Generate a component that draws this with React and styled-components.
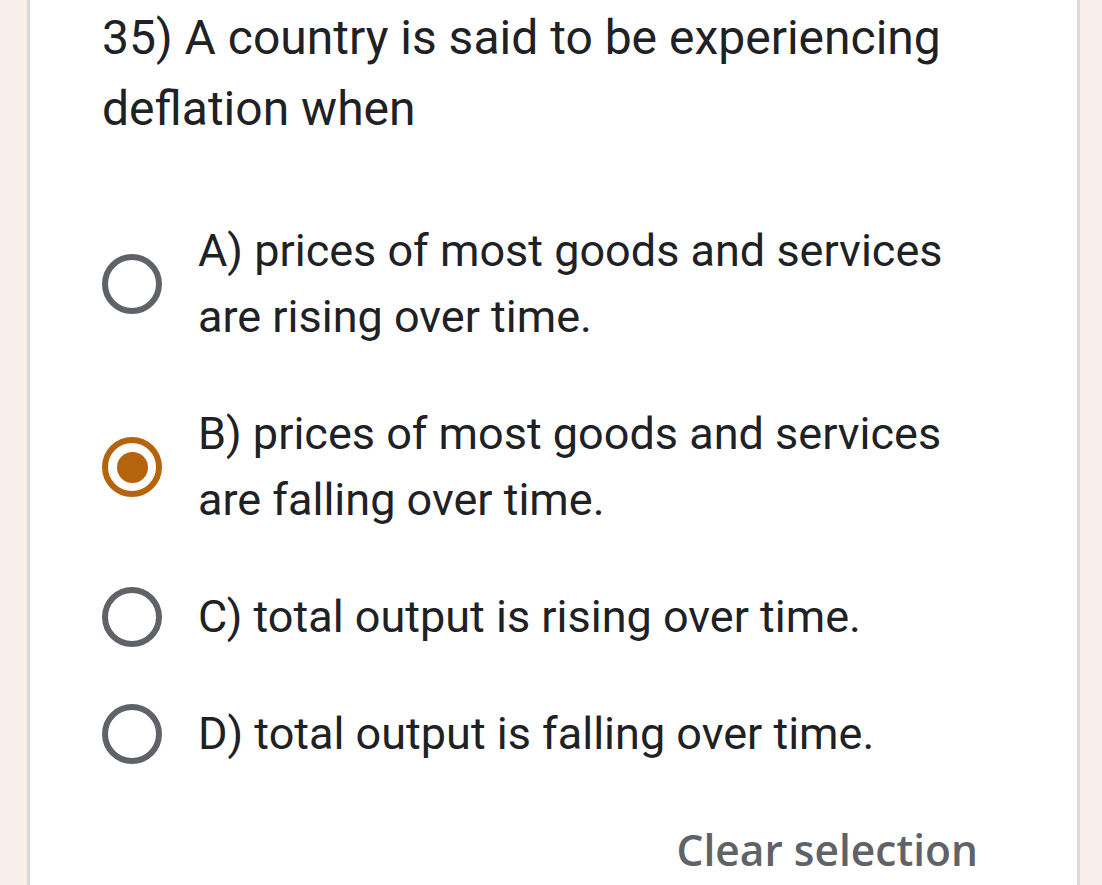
import React, { useState } from 'react';
import styled, { createGlobalStyle } from 'styled-components';

const GlobalStyle = createGlobalStyle`
  html, body {
    margin: 0;
    padding: 0;
    background: #f9efea;
  }
  body {
    font-family: Roboto, "Liberation Sans", sans-serif;
    -webkit-font-smoothing: antialiased;
  }
`;

const Page = styled.div`
  display: flex;
  padding: 0 22px 0 27px;
  height: 885px;
  overflow: hidden;
`;

const Card = styled.div`
  flex: 1;
  background: #fff;
  border-left: 3px solid #dadada;
  border-right: 3px solid #dadada;
  padding: 2px 99px 0 72px;
`;

const Question = styled.div`
  font-size: 48px;
  line-height: 71px;
  color: #202124;
`;

const Options = styled.div`
  display: flex;
  flex-direction: column;
  gap: 51px;
  margin-top: 74px;
`;

const Option = styled.label`
  display: flex;
  align-items: center;
  gap: 36px;
  cursor: pointer;
`;

const Radio = styled.span`
  flex: none;
  width: 48px;
  height: 48px;
  border: 6px solid ${p => (p.checked ? '#b5630c' : '#5f6368')};
  border-radius: 50%;
  display: flex;
  align-items: center;
  justify-content: center;
  &::after {
    content: '';
    width: 31px;
    height: 31px;
    border-radius: 50%;
    background: #b5630c;
    display: ${p => (p.checked ? 'block' : 'none')};
  }
`;

const OptionText = styled.span`
  font-size: 45px;
  line-height: 66px;
  color: #202124;
`;

const Footer = styled.div`
  display: flex;
  justify-content: flex-end;
  margin-top: 58px;
`;

const ClearButton = styled.button`
  border: none;
  background: none;
  padding: 0;
  font-family: "Open Sans", Roboto, sans-serif;
  font-weight: 600;
  font-size: 42.5px;
  line-height: 50px;
  color: #5f6368;
  cursor: pointer;
`;

const options = [
  { id: 'a', text: 'A) prices of most goods and services are rising over time.' },
  { id: 'b', text: 'B) prices of most goods and services are falling over time.' },
  { id: 'c', text: 'C) total output is rising over time.' },
  { id: 'd', text: 'D) total output is falling over time.' },
];

const App = () => {
  const [selected, setSelected] = useState('b');
  return (
    <>
      <GlobalStyle />
      <Page>
        <Card>
          <Question>35) A country is said to be experiencing deflation when</Question>
          <Options>
            {options.map(o => (
              <Option key={o.id} onClick={() => setSelected(o.id)}>
                <Radio checked={selected === o.id} />
                <OptionText>{o.text}</OptionText>
              </Option>
            ))}
          </Options>
          <Footer>
            <ClearButton onClick={() => setSelected(null)}>Clear selection</ClearButton>
          </Footer>
        </Card>
      </Page>
    </>
  );
};

export default App;
